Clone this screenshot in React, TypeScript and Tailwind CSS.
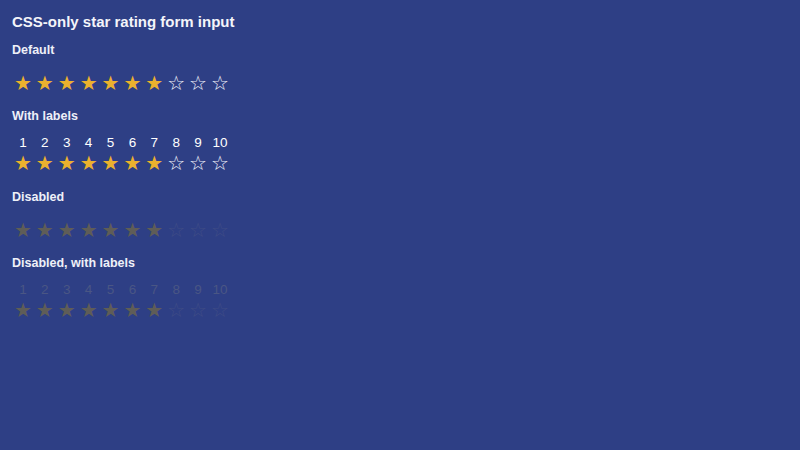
const ratings = [1, 2, 3, 4, 5, 6, 7, 8, 9, 10];

function Stars({ value, labels, disabled }: { value: number; labels?: boolean; disabled?: boolean }) {
  return (
    <div className="flex">
      {ratings.map((n) => {
        const on = n <= value;
        let star = on ? "text-[#ebb12e]" : "text-[#eef0f8]";
        if (disabled) star = on ? "text-[#5f5d57]" : "text-[#3f4c86]";
        return (
          <label key={n} className="flex w-[21.9px] flex-col items-center">
            {labels && (
              <span
                className={`text-[13.5px] leading-[19px] ${disabled ? "text-[#4a5684]" : "text-white"}`}
              >
                {n}
              </span>
            )}
            <span className={`text-[20px] leading-[22px] ${star}`} style={{ fontFamily: '"DejaVu Sans", sans-serif' }}>
              {on ? "★" : "☆"}
            </span>
          </label>
        );
      })}
    </div>
  );
}

function Section({ title, children }: { title: string; children: React.ReactNode }) {
  return (
    <section className="flex flex-col">
      <h2 className="text-[12.5px] font-bold leading-[16px] text-[#eef0f8]">{title}</h2>
      {children}
    </section>
  );
}

export default function App() {
  return (
    <div
      className="min-h-[450px] w-full bg-[#2e3f85] px-3 pt-[12px]"
      style={{ fontFamily: '"Liberation Sans", Arial, sans-serif' }}
    >
      <h1 className="text-[15px] font-bold leading-[20px] text-[#f4f5fa]">CSS-only star rating form input</h1>
      <div className="mt-[10px] flex flex-col">
        <Section title="Default">
          <div className="mt-[14px]">
            <Stars value={7} />
          </div>
        </Section>
        <div className="mt-[14px]">
          <Section title="With labels">
            <div className="mt-[9px]">
              <Stars value={7} labels />
            </div>
          </Section>
        </div>
        <div className="mt-[15px]">
          <Section title="Disabled">
            <div className="mt-[14px]">
              <Stars value={7} disabled />
            </div>
          </Section>
        </div>
        <div className="mt-[14px]">
          <Section title="Disabled, with labels">
            <div className="mt-[9px]">
              <Stars value={7} labels disabled />
            </div>
          </Section>
        </div>
      </div>
    </div>
  );
}
